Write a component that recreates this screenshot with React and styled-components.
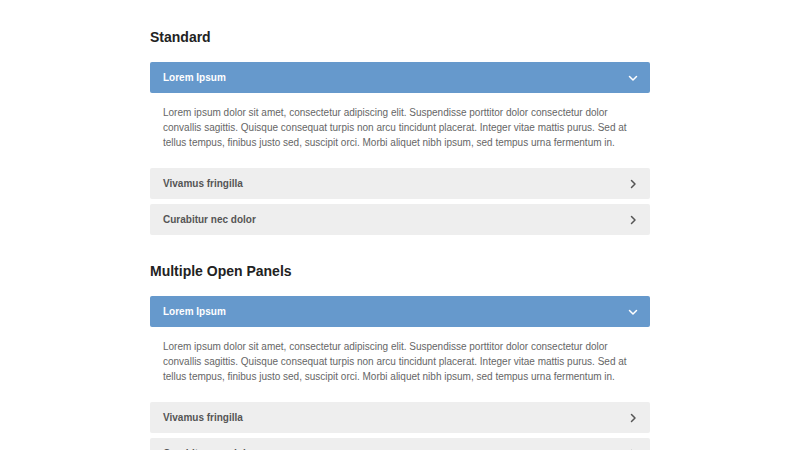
import React, { useState } from 'react';
import styled, { createGlobalStyle } from 'styled-components';

const GlobalStyle = createGlobalStyle`
    html, body {
        margin: 0;
        padding: 0;
        background: #fff;
        font-family: "Liberation Sans", Arial, sans-serif;
    }
`;

const Page = styled.div`
    width: 500px;
    margin: 0 auto;
    padding-top: 28px;
    padding-bottom: 40px;
`;

const Section = styled.section`
    margin-bottom: 27px;
`;

const Title = styled.h2`
    margin: 0 0 16px;
    font-size: 14px;
    line-height: 18px;
    font-weight: bold;
    color: #222;
`;

const List = styled.div`
    display: flex;
    flex-direction: column;
    gap: 5px;
`;

const Header = styled.button`
    display: flex;
    align-items: center;
    justify-content: space-between;
    width: 100%;
    height: 31px;
    padding: 0 13px;
    border: none;
    border-radius: 2px;
    background: ${({ open }) => (open ? '#6699cc' : '#eeeeee')};
    color: ${({ open }) => (open ? '#fff' : '#555')};
    font-family: "Liberation Sans", Arial, sans-serif;
    font-size: 10px;
    font-weight: bold;
    text-align: left;
    cursor: pointer;
`;

const Icon = styled.svg`
    width: 12px;
    height: 12px;
    margin-right: -2px;
    flex-shrink: 0;
`;

const Body = styled.div`
    padding: 12px 13px 13px;
    font-size: 10px;
    line-height: 15px;
    color: #666;
`;

const text =
    'Lorem ipsum dolor sit amet, consectetur adipiscing elit. Suspendisse porttitor dolor consectetur dolor convallis sagittis. Quisque consequat turpis non arcu tincidunt placerat. Integer vitae mattis purus. Sed at tellus tempus, finibus justo sed, suscipit orci. Morbi aliquet nibh ipsum, sed tempus urna fermentum in.';

const panels = [
    { title: 'Lorem Ipsum', body: text },
    { title: 'Vivamus fringilla', body: text },
    { title: 'Curabitur nec dolor', body: text },
];

const Chevron = ({ open }) => (
    <Icon viewBox="0 0 12 12" fill="none" stroke="currentColor" strokeWidth="1.5" strokeLinecap="round" strokeLinejoin="round">
        {open ? <path d="M2.5 4.5 L6 8 L9.5 4.5" /> : <path d="M4.5 2.5 L8 6 L4.5 9.5" />}
    </Icon>
);

const Accordion = ({ title, multiple }) => {
    const [openIds, setOpenIds] = useState([0]);

    const toggle = (index) => {
        if (openIds.includes(index)) {
            setOpenIds(openIds.filter((i) => i !== index));
        } else {
            setOpenIds(multiple ? [...openIds, index] : [index]);
        }
    };

    return (
        <Section>
            <Title>{title}</Title>
            <List>
                {panels.map((item, index) => {
                    const open = openIds.includes(index);
                    return (
                        <div key={index}>
                            <Header open={open} onClick={() => toggle(index)}>
                                {item.title}
                                <Chevron open={open} />
                            </Header>
                            {open && <Body>{item.body}</Body>}
                        </div>
                    );
                })}
            </List>
        </Section>
    );
};

const App = () => {
    return (
        <>
            <GlobalStyle />
            <Page>
                <Accordion title="Standard" />
                <Accordion title="Multiple Open Panels" multiple />
            </Page>
        </>
    );
};

export default App;
